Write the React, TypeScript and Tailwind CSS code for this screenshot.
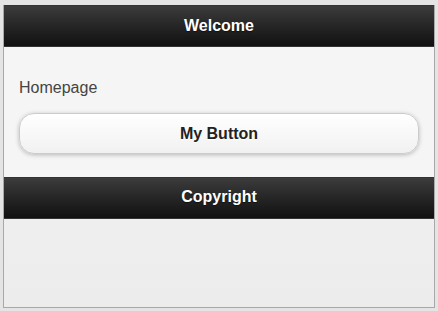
export default function App() {
  return (
    <div className="h-[311px] w-[438px] bg-[#e4e4e4] px-[3px] pb-[3px] pt-[5px] font-['Liberation_Sans',Arial,sans-serif]">
      <div className="flex h-full flex-col border-x border-b border-[#a8a8a8] bg-gradient-to-b from-[#f5f5f5] to-[#ececec]">
        {/* Header */}
        <div className="flex h-[42px] items-center justify-center border-y border-[#333] bg-gradient-to-b from-[#3c3c3c] to-[#111] text-[16px] font-bold text-white [text-shadow:0_1px_1px_#111]">
          Welcome
        </div>

        {/* Content */}
        <div className="bg-[#f5f5f5] px-[15px] pb-[23px] pt-[32px]">
          <p className="text-[16px] leading-[18px] text-[#444]">Homepage</p>
          <button className="mt-[16px] flex h-[41px] w-full items-center justify-center rounded-[15px] border border-[#ccc] bg-gradient-to-b from-white to-[#f1f1f1] text-[16px] font-bold text-[#222] shadow-[0_1px_4px_rgba(0,0,0,0.25)] [text-shadow:0_1px_0_#fff]">
            My Button
          </button>
        </div>

        {/* Footer */}
        <div className="flex h-[42px] items-center justify-center border-y border-[#333] bg-gradient-to-b from-[#3c3c3c] to-[#111] pb-[3px] text-[16px] font-bold text-white [text-shadow:0_1px_1px_#111]">
          Copyright
        </div>

        <div className="flex-1" />
      </div>
    </div>
  );
}
